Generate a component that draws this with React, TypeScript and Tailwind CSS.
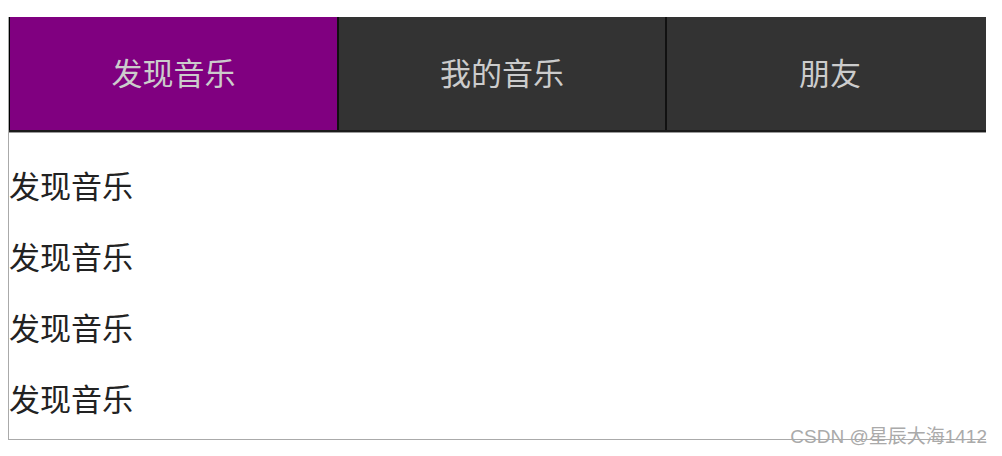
const tabs = ['发现音乐', '我的音乐', '朋友'];
const items = ['发现音乐', '发现音乐', '发现音乐', '发现音乐'];

export default function App() {
  const active = 0;

  return (
    <div
      className="relative h-[456px] w-[1002px] overflow-hidden bg-white"
      style={{ fontFamily: '"Noto Sans CJK SC", "Microsoft YaHei", sans-serif' }}
    >
      <div className="ml-[8px] mt-[17px] w-[978px] overflow-hidden border-b border-l border-[#aaaaaa]">
        {/* tab bar */}
        <div className="h-[116px] border-b border-[#9a9a9a]">
          <div className="flex h-[115px] border-b-2 border-[#1c1c1c]">
            {tabs.map((tab, i) => (
              <div
                key={tab}
                className={`flex w-[328px] shrink-0 items-center justify-center pb-[3px] text-[31px] text-[#cccccc] ${
                  i === 0 ? 'border-l border-black' : 'border-l-2 border-[#111111]'
                } ${i === active ? 'bg-[#800080]' : 'bg-[#333333]'}`}
              >
                {tab}
              </div>
            ))}
          </div>
        </div>

        {/* list */}
        <ul className="pb-[6px] pt-[16px]">
          {items.map((item, i) => (
            <li key={i} className="h-[71px] text-[31px] leading-[71px] text-[#222222]">
              {item}
            </li>
          ))}
        </ul>
      </div>

      <span
        className="absolute right-[15px] top-[425px] text-[19px] leading-[24px] text-[#aaaaaa]"
        style={{ fontFamily: '"Liberation Sans", "Noto Sans CJK SC", sans-serif' }}
      >
        CSDN @星辰大海1412
      </span>
    </div>
  );
}
